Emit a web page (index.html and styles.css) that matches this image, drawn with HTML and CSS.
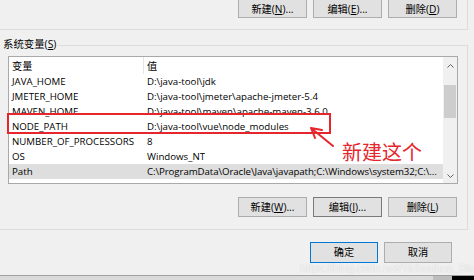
FILE: index.html
```html
<!DOCTYPE html>
<html>
<head>
<meta charset="utf-8">
<link rel="stylesheet" href="styles.css">
</head>
<body>
<div class="dialog">
  <div class="user-group">
    <div class="btn-row top-row">
      <button class="btn top-btn">新建(<u>N</u>)...</button>
      <button class="btn top-btn">编辑(<u>E</u>)...</button>
      <button class="btn top-btn">删除(<u>D</u>)</button>
    </div>
  </div>

  <div class="sys">
    <div class="sys-head">
      <span class="sys-label">系统变量(<u>S</u>)</span>
      <span class="sys-line"></span>
    </div>
    <div class="sys-body">
      <div class="list">
        <div class="list-main">
          <div class="row header"><div class="c1 hc1">变量</div><div class="c2">值</div></div>
          <div class="row"><div class="c1">JAVA_HOME</div><div class="c2">D:\java-tool\jdk</div></div>
          <div class="row"><div class="c1">JMETER_HOME</div><div class="c2">D:\java-tool\jmeter\apache-jmeter-5.4</div></div>
          <div class="row"><div class="c1">MAVEN_HOME</div><div class="c2">D:\java-tool\maven\apache-maven-3.6.0</div></div>
          <div class="row"><div class="c1">NODE_PATH</div><div class="c2">D:\java-tool\vue\node_modules</div></div>
          <div class="row"><div class="c1">NUMBER_OF_PROCESSORS</div><div class="c2">8</div></div>
          <div class="row"><div class="c1">OS</div><div class="c2">Windows_NT</div></div>
          <div class="row selected"><div class="c1">Path</div><div class="c2 tight">C:\ProgramData\Oracle\Java\javapath;C:\Windows\system32;C:\...</div></div>
          <div class="row"><div class="c1">PATHEXT</div><div class="c2">.COM;.EXE;.BAT;.CMD;.VBS;.VBE;.JS;.JSE;.WSF;.WSH;.MSC</div></div>
        </div>
        <div class="scrollbar">
          <div class="sb-btn sb-up"><svg width="7" height="4" viewBox="0 0 7 4"><path d="M0.5 3.5 L3.5 0.5 L6.5 3.5" fill="none" stroke="#606060" stroke-width="1"/></svg></div>
          <div class="sb-gap"></div>
          <div class="sb-thumb"></div>
          <div class="sb-track"></div>
          <div class="sb-btn sb-down"><svg width="7" height="4" viewBox="0 0 7 4"><path d="M0.5 0.5 L3.5 3.5 L6.5 0.5" fill="none" stroke="#606060" stroke-width="1"/></svg></div>
        </div>
      </div>
      <div class="btn-row sys-btns">
        <button class="btn">新建(<u>W</u>)...</button>
        <button class="btn focused">编辑(<u>I</u>)...</button>
        <button class="btn">删除(<u>L</u>)</button>
      </div>
    </div>
  </div>

  <div class="footer">
    <button class="btn default">确定</button>
    <button class="btn">取消</button>
  </div>

  <div class="taskbar">
    <span class="tb-gray"></span>
    <span class="tb-black"></span>
  </div>

  <svg class="annot" width="474" height="280" viewBox="0 0 474 280">
    <rect x="8" y="114" width="322" height="19" fill="none" stroke="#e5262c" stroke-width="2"/>
    <path d="M333 146 L311 128 M311 128 L322 130 M311 128 L315 138" fill="none" stroke="#e5262c" stroke-width="2" stroke-linecap="round"/>
  </svg>
  <div class="note">新建这个</div>
  <div class="watermark">https://blog.csdn.net/Yichunhua_Blog</div>
</div>
</body>
</html>
```

FILE: styles.css
```css
* { box-sizing: border-box; }
html, body { margin: 0; padding: 0; }
body {
  font-family: "Open Sans", "Noto Sans CJK SC", sans-serif;
  font-size: 10.4px;
  color: #000;
  background: #f0f0f0;
}
.dialog {
  position: relative;
  width: 474px;
  height: 280px;
  background: #f0f0f0;
  overflow: hidden;
}
.user-group {
  width: 468px;
  height: 30px;
  border-right: 1px solid #dcdcdc;
  border-bottom: 1px solid #dcdcdc;
}
.btn-row {
  display: flex;
  justify-content: flex-end;
  gap: 6px;
}
.top-row { padding-right: 10px; }
.btn {
  font-family: inherit;
  font-size: 10.2px;
  color: #000;
  width: 69px;
  height: 20px;
  padding: 0;
  margin: 0;
  background: #e1e1e1;
  border: 1px solid #adadad;
  line-height: 18px;
  text-align: center;
}
.btn u { text-underline-offset: 1px; }
.top-btn {
  height: 18px;
  border-top: 0;
  line-height: 18px;
}
.sys {
  width: 468px;
  margin-top: 7px;
}
.sys-head {
  display: flex;
  height: 14px;
}
.sys-label {
  line-height: 14px;
  padding-left: 3px;
  padding-right: 2px;
}
.sys-line {
  flex: 1;
  margin-top: 8px;
  border-top: 1px solid #dcdcdc;
  border-right: 1px solid #dcdcdc;
}
.sys-body {
  border-right: 1px solid #dcdcdc;
  border-bottom: 1px solid #dcdcdc;
  padding: 5px 9px 12px 8px;
}
.list {
  width: 450px;
  height: 128px;
  border: 1px solid #a9a9a9;
  background: #fff;
  display: flex;
  font-size: 9.7px;
}
.list-main {
  flex: 1;
  overflow: hidden;
}
.row {
  display: flex;
  height: 15px;
  line-height: 15px;
  white-space: nowrap;
}
.header {
  height: 17px;
  padding-top: 2px;
  font-size: 10.2px;
}
.c1 {
  width: 135px;
  flex: none;
  padding-left: 3px;
}
.hc1 { border-right: 1px solid #e5e5e5; margin-top: -2px; padding-top: 2px; height: 17px; }
.c2 {
  padding-left: 3px;
  overflow: hidden;
}
.tight { letter-spacing: -0.08px; }
.selected { background: #dedede; }
.scrollbar {
  width: 14px;
  flex: none;
  background: #f0f0f0;
  display: flex;
  flex-direction: column;
}
.sb-btn {
  display: flex;
  align-items: center;
  justify-content: center;
}
.sb-up { height: 17px; }
.sb-gap { height: 11px; }
.sb-thumb {
  height: 33px;
  margin: 0 1px;
  background: #cdcdcd;
}
.sb-track { flex: 1; }
.sb-down { height: 14px; }
.sys-btns {
  margin-top: 13px;
  padding-right: 1px;
}
.focused { border-color: #7a7a7a; }
.footer {
  height: 45px;
  display: flex;
  justify-content: flex-end;
  gap: 6px;
  padding: 12px 22px 0 0;
}
.footer .btn { width: 68px; height: 21px; line-height: 19px; }
.default { border-color: #0078d7; }
.taskbar {
  height: 6px;
  border-top: 1px solid #a0a0a0;
  background: #dadada;
  display: flex;
  justify-content: flex-end;
}
.tb-gray { width: 19px; background: #bdbdbd; }
.tb-black { width: 22px; background: #000; }
.annot {
  position: absolute;
  left: 0;
  top: 0;
}
.note {
  position: absolute;
  left: 342px;
  top: 139px;
  font-family: "Noto Sans CJK SC", sans-serif;
  font-size: 20px;
  line-height: 26px;
  color: #e5262c;
}
.watermark {
  position: absolute;
  left: 300px;
  top: 261px;
  font-family: "Liberation Sans", sans-serif;
  font-size: 11px;
  line-height: 14px;
  color: rgba(255, 255, 255, 0.75);
  text-shadow: 0 0 1px rgba(160, 160, 160, 0.5);
  white-space: nowrap;
}
```
